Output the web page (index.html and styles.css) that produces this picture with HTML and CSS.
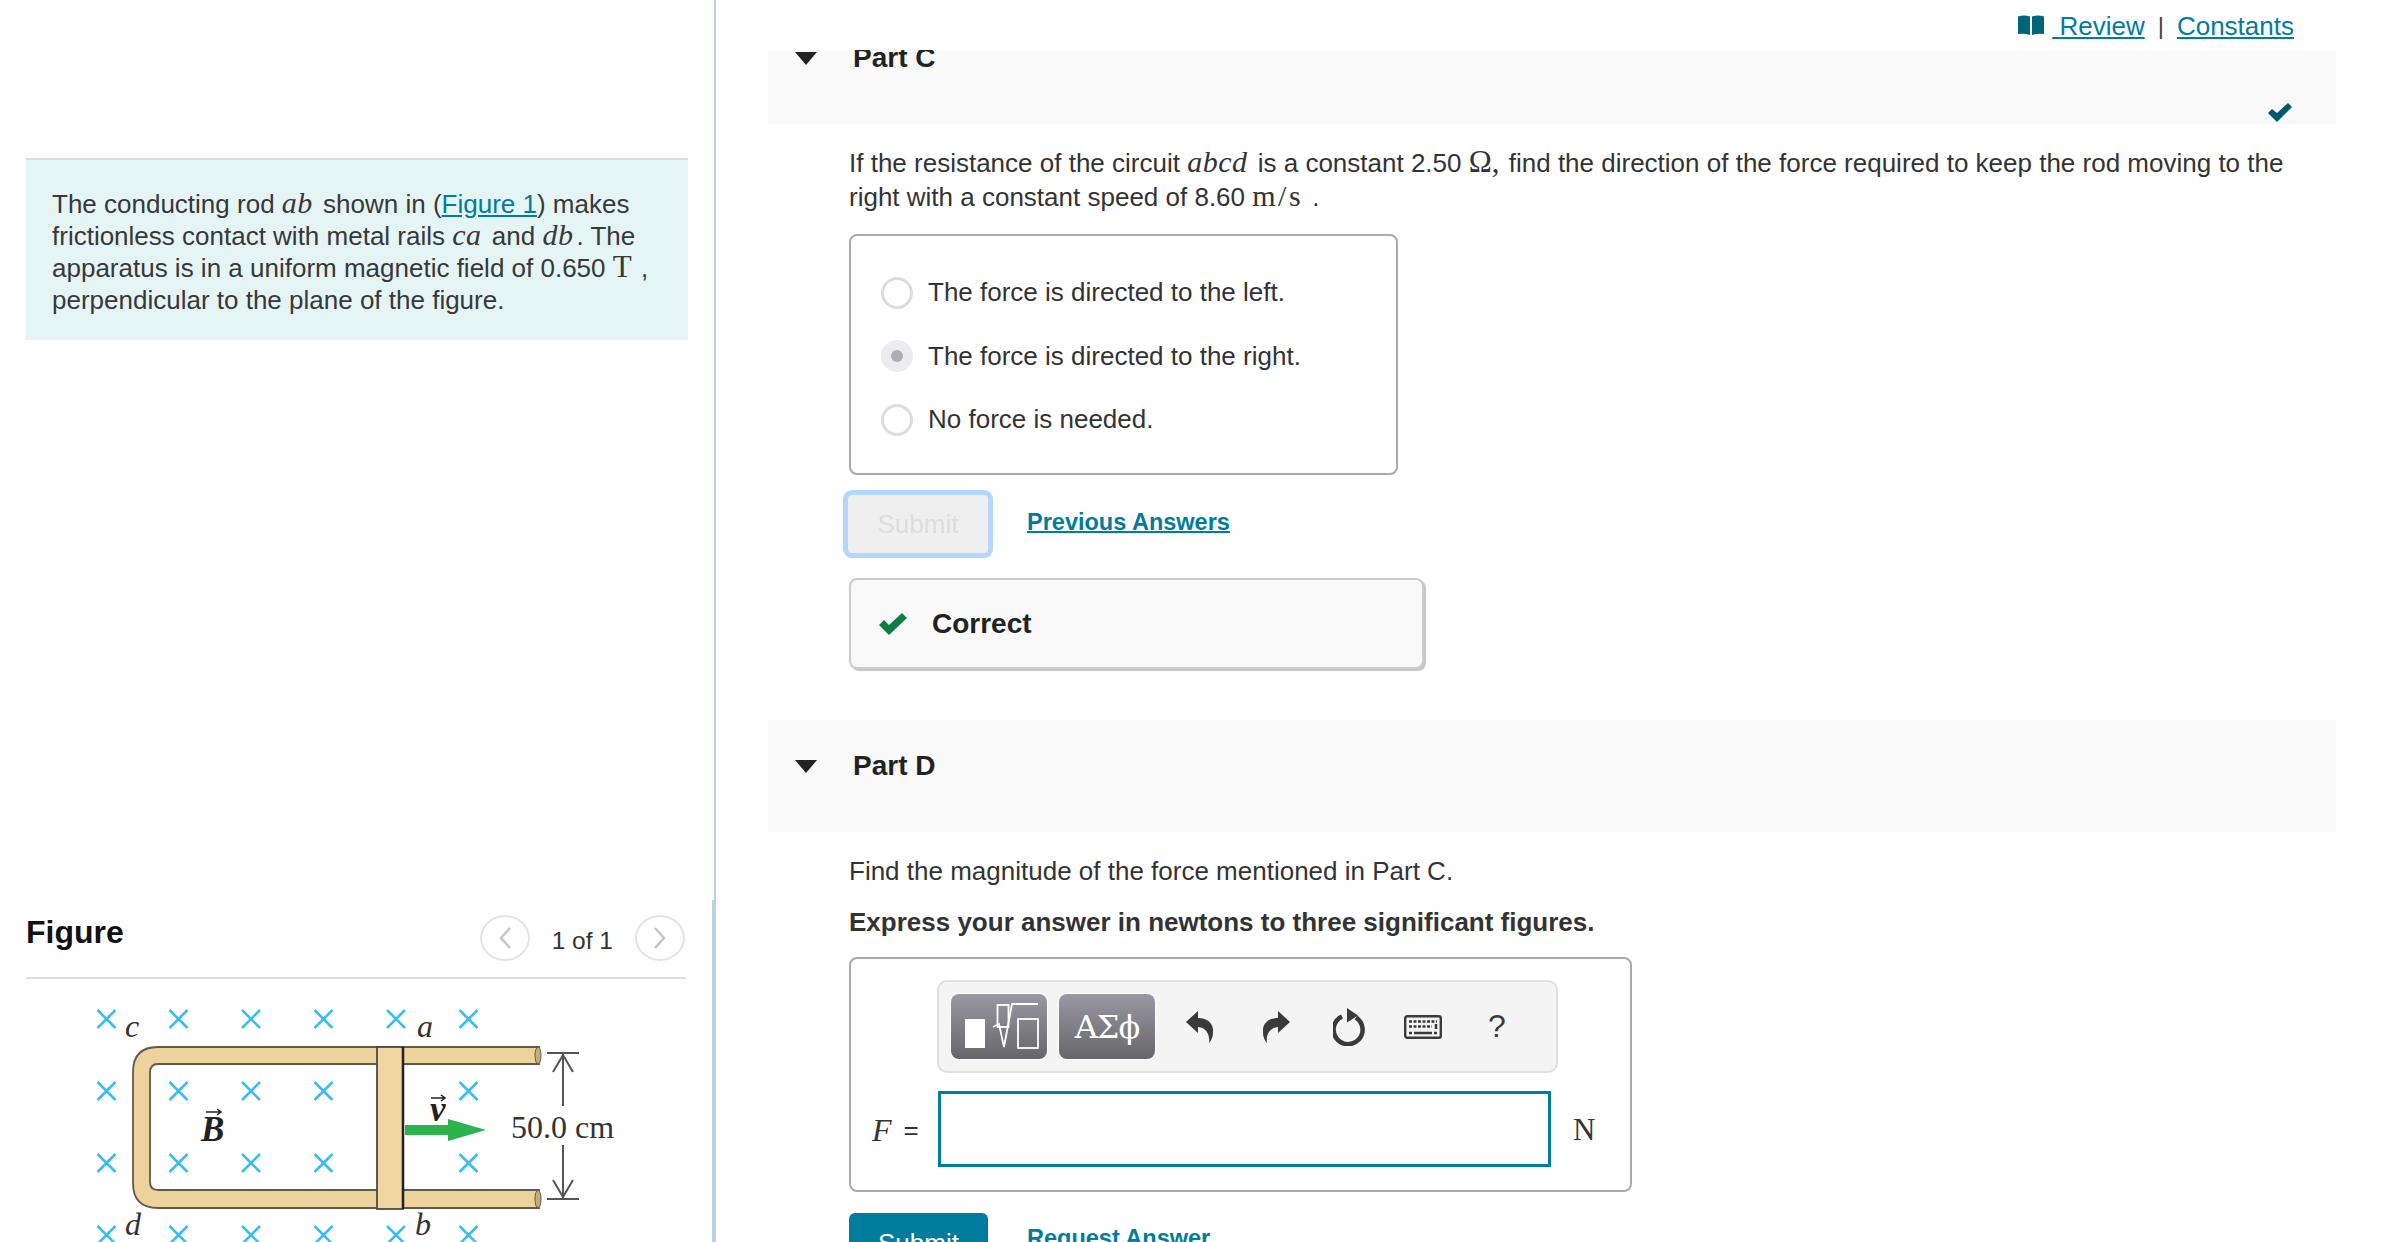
FILE: index.html
```html
<!DOCTYPE html>
<html lang="en">
<head>
<meta charset="utf-8">
<title>Part D</title>
<link rel="stylesheet" href="styles.css">
</head>
<body>
<div class="page">
  <aside class="left">
    <div class="intro">
      <p>The conducting rod <i class="m">ab</i> shown in (<a href="#">Figure 1</a>) makes frictionless contact with metal rails <i class="m">ca</i> and <i class="m">db</i>. The apparatus is in a uniform magnetic field of 0.650 <span class="mu">T</span> , perpendicular to the plane of the figure.</p>
    </div>
    <div class="fig-head">
      <h2>Figure</h2>
      <div class="pager">
        <span class="circle"><svg width="14" height="24" viewBox="0 0 14 24"><path class="chev" d="M12 2 3 12l9 10"/></svg></span>
        <span class="count">1 of 1</span>
        <span class="circle"><svg width="14" height="24" viewBox="0 0 14 24"><path class="chev" d="M2 2l9 10-9 10"/></svg></span>
      </div>
    </div>
    <svg class="diagram" width="714" height="263" viewBox="2 979 714 263">
      <path class="crosses" d="M99.500 1010l18 18m0-18l-18 18M171.500 1010l18 18m0-18l-18 18M244 1010l18 18m0-18l-18 18M316.500 1010l18 18m0-18l-18 18M389 1010l18 18m0-18l-18 18M461.500 1010l18 18m0-18l-18 18M99.500 1082l18 18m0-18l-18 18M171.500 1082l18 18m0-18l-18 18M244 1082l18 18m0-18l-18 18M316.500 1082l18 18m0-18l-18 18M461.500 1082l18 18m0-18l-18 18M99.500 1154l18 18m0-18l-18 18M171.500 1154l18 18m0-18l-18 18M244 1154l18 18m0-18l-18 18M316.500 1154l18 18m0-18l-18 18M461.500 1154l18 18m0-18l-18 18M99.500 1226l18 18m0-18l-18 18M171.500 1226l18 18m0-18l-18 18M244 1226l18 18m0-18l-18 18M316.500 1226l18 18m0-18l-18 18M389 1226l18 18m0-18l-18 18M461.500 1226l18 18m0-18l-18 18"/>
      <path class="rail" d="M541 1047H160Q135 1047 135 1072V1183Q135 1208 160 1208H541V1190H160Q152 1190 152 1182V1073Q152 1064 160 1064H541Z"/>
      <ellipse class="rail-end" cx="540" cy="1055.500" rx="3" ry="8.500"/>
      <ellipse class="rail-end" cx="540" cy="1199" rx="3" ry="9"/>
      <rect class="rod" x="379" y="1047" width="26" height="162"/>
      <path class="rod-edge" d="M405 1047V1209"/>
      <path class="arrow" d="M407 1125H450V1119L488 1130 450 1141V1135H407Z"/>
      <path class="dim" d="M549 1053H581M549 1199H581M565 1053V1106M565 1145V1199M555 1072 565 1055 575 1072M555 1180 565 1197 575 1180"/>
      <path class="vec" d="M208 1112H223M219 1109l4 3-4 3M433 1098H447M443 1095l4 3-4 3"/>
      <text class="lab" x="127" y="1037">c</text>
      <text class="lab" x="419" y="1037">a</text>
      <text class="lab" x="127" y="1235">d</text>
      <text class="lab" x="417" y="1235">b</text>
      <text class="lab strong" x="203" y="1141">B</text>
      <text class="lab strong" x="432" y="1121">v</text>
      <text class="dim-text" x="513" y="1138">50.0 cm</text>
    </svg>
  </aside>

  <main class="right">
    <nav class="top-links">
      <svg class="book" width="26" height="20" viewBox="0 0 26 20"><path d="M0 1.500Q6 -.500 12 1.500V20Q6 18 0 19zM26 1.500Q20 -.500 14 1.500V20Q20 18 26 19z"/></svg>
      <a href="#">&nbsp;Review</a>
      <span class="sep">|</span>
      <a href="#">Constants</a>
    </nav>
    <div class="scroller">
      <div class="scroll-inner">
        <section>
          <header class="part-head">
            <span class="tri"></span>
            <h3>Part C</h3>
            <svg class="done" width="24" height="19" viewBox="0 0 24 19"><path d="M0 10l4-4 5 4L20 0l4 4-15 15z"/></svg>
          </header>
          <div class="part-body part-c">
            <p class="q">If the resistance of the circuit <i class="m">abcd</i> is a constant 2.50 <span class="mu">Ω,</span> find the direction of the force required to keep the rod moving to the right with a constant speed of 8.60 <span class="mu wide">m/s</span> .</p>
            <div class="choices">
              <label class="choice"><span class="radio"></span>The force is directed to the left.</label>
              <label class="choice"><span class="radio on"></span>The force is directed to the right.</label>
              <label class="choice"><span class="radio"></span>No force is needed.</label>
            </div>
            <div class="actions">
              <button class="btn disabled" type="button">Submit</button>
              <a class="strong-link" href="#">Previous Answers</a>
            </div>
            <div class="correct">
              <svg width="28" height="22" viewBox="0 0 28 22"><path d="M0 12l5-5 5 5L23 0l5 5-18 17z"/></svg>
              <strong>Correct</strong>
            </div>
          </div>
        </section>
        <section>
          <header class="part-head">
            <span class="tri"></span>
            <h3>Part D</h3>
          </header>
          <div class="part-body part-d">
            <p class="q">Find the magnitude of the force mentioned in Part C.</p>
            <p class="q bold">Express your answer in newtons to three significant figures.</p>
            <div class="answer">
              <div class="toolbar">
                <span class="tool">
                  <svg width="96" height="65" viewBox="0 0 96 65">
                    <rect class="w" x="14" y="25" width="20" height="29"/>
                    <rect class="wl" x="46.500" y="11" width="11" height="22"/>
                    <path class="wl" d="M42 33l6-3 5 23 8-43h26"/>
                    <rect class="wl" x="67" y="25" width="20" height="29"/>
                  </svg>
                </span>
                <span class="tool greek">ΑΣϕ</span>
                <svg class="ic undo" width="27" height="32" viewBox="0 0 27 32"><path d="M0 11 12 0v7c10 0 16 6 15 15 0 4-2 8-4 10 1-6-1-15-11-16v6z"/></svg>
                <svg class="ic redo" width="27" height="32" viewBox="0 0 27 32"><path d="M27 11 15 0v7C5 7-1 13 0 22c0 4 2 8 4 10-1-6 1-15 11-16v6z"/></svg>
                <svg class="ic reset" width="34" height="38" viewBox="0 0 34 38"><path class="ring" d="M23 9.500A14.500 14.500 0 1 1 9 8.500"/><path d="M14 0l11 7.500-11 7z"/></svg>
                <svg class="ic kbd" width="38" height="24" viewBox="0 0 38 24"><rect class="kb" x="1.200" y="1.200" width="35.600" height="21.600" rx="2"/><path class="keys" d="M5 6.500h28M5 11.500h23M5 18h3"/><path class="keyline" d="M10 18h18M30 18h3M32 9v5"/></svg>
                <span class="help">?</span>
              </div>
              <div class="entry">
                <span class="var"><i>F</i><span class="eq">=</span></span>
                <input class="field" type="text" aria-label="F">
                <span class="unit">N</span>
              </div>
            </div>
            <div class="actions last">
              <button class="btn primary" type="button">Submit</button>
              <a class="strong-link" href="#">Request Answer</a>
            </div>
          </div>
        </section>
      </div>
    </div>
  </main>
</div>
</body>
</html>
```

FILE: styles.css
```css
* { box-sizing: border-box; }
html, body { margin: 0; height: 100%; background: #fff; overflow: hidden; }
body { font-family: "Liberation Sans", Arial, sans-serif; font-size: 26px; color: #333; }
p { margin: 0; }
a { color: #007c9d; }

.page { display: grid; grid-template-columns: 716px 1fr; height: 1242px; overflow: hidden; }

/* left column */
.left { border-right: 2px solid #bdd0e0; padding-top: 158px; position: relative; }
.left::after { content: ""; position: absolute; right: 0; top: 900px; bottom: 0; width: 2px; background: #bdd0e0; }
.intro { margin-left: 26px; width: 662px; height: 182px; background: #e5f5f6; border-top: 2px solid #d5dfe1; padding: 28px 26px 0; line-height: 32px; font-size: 26px; color: #383838; }
.m { font-family: "Liberation Serif", serif; font-style: italic; font-size: 30px; line-height: 0; letter-spacing: .5px; margin-right: 3px; }
.mu { font-family: "Liberation Serif", serif; font-size: 31px; line-height: 0; margin-right: 2px; }
.mu.wide { letter-spacing: 2.500px; font-size: 30px; }

.fig-head { margin: 572px 0 0 26px; width: 660px; height: 67px; display: flex; justify-content: space-between; align-items: flex-start; border-bottom: 2px solid #ddd; }
.fig-head h2 { margin: 1px 0 0; font-size: 32px; line-height: 38px; font-weight: bold; color: #111; }
.pager { display: flex; align-items: center; gap: 22px; color: #333; margin-top: 3px; margin-right: 1px; }
.circle { width: 50px; height: 46px; border: 2px solid #e4e4e4; border-radius: 50%; display: flex; align-items: center; justify-content: center; }
.chev { fill: none; stroke: #c4c4c4; stroke-width: 2.500; }
.count { font-size: 24.500px; position: relative; top: 3px; }

.diagram { display: block; }
.crosses { fill: none; stroke: #37bdf1; stroke-width: 2.500; }
.rail { fill: #edd29c; stroke: #5e5a50; stroke-width: 1.800; }
.rail-end { fill: #c9ad78; stroke: #5e5a50; stroke-width: 1; }
.rod { fill: #f0d6a0; stroke: #4c4a44; stroke-width: 1.800; }
.rod-edge { stroke: #222; stroke-width: 2.500; }
.arrow { fill: #2db34e; }
.dim { fill: none; stroke: #555; stroke-width: 2; }
.vec { fill: none; stroke: #222; stroke-width: 1.500; }
.lab { font-family: "Liberation Serif", serif; font-style: italic; font-size: 32px; fill: #333; }
.lab.strong { font-weight: bold; font-size: 35px; fill: #222; }
.dim-text { font-family: "Liberation Serif", serif; font-size: 32px; fill: #333; }

/* right column */
.top-links { height: 50px; padding: 11px 94px 0 0; display: flex; justify-content: flex-end; align-items: flex-start; line-height: 30px; font-size: 26px; }
.book { fill: #00647a; margin: 4px 8px 0 0; }
.sep { margin: 0 13px; color: #444; font-size: 24px; }
.scroller { height: 1192px; overflow: hidden; }
.scroll-inner { margin-top: -38px; padding: 0 52px; }

.part-head { position: relative; height: 112px; background: #f9f9f9; display: flex; align-items: flex-start; padding: 30px 0 0 29px; }
.part-head h3 { margin: 0 0 0 20px; font-size: 28px; line-height: 32px; color: #222; font-weight: bold; }
.tri { width: 0; height: 0; margin: 10px 16px 0 -2px; border-left: 11.500px solid transparent; border-right: 11.500px solid transparent; border-top: 13px solid #222; }
.done { position: absolute; right: 44px; bottom: 2px; fill: #00586e; }

.part-body { padding-left: 81px; }
.part-c { height: 596px; padding-top: 22px; }
.part-d { padding-top: 22px; }
.q { line-height: 34px; font-size: 26px; color: #333; padding-right: 30px; }
.q.bold { font-weight: bold; margin-top: 17px; }

.choices { width: 549px; height: 241px; margin-top: 20px; border: 2px solid #aaa; border-radius: 8px; padding: 25px 0 0 30px; }
.choice { display: flex; align-items: center; height: 63.500px; font-size: 26px; color: #333; }
.radio { width: 32px; height: 32px; border: 3px solid #dcdcdc; border-radius: 50%; margin-right: 15px; background: #fff; flex: none; display: flex; align-items: center; justify-content: center; }
.radio.on { background: #ececf0; border-color: #ececf0; }
.radio.on::after { content: ""; width: 12px; height: 12px; border-radius: 50%; background: #adadb4; }

.actions { display: flex; align-items: center; gap: 39px; margin-top: 15px; }
.btn { font: 26px "Liberation Sans", Arial, sans-serif; border: 0; padding: 0; }
.btn.disabled { width: 140px; height: 58px; margin: 5px 0 0 -1px; background: #efefef; color: #ddd; border-radius: 4px; box-shadow: 0 0 0 5px #b3d7ff; }
.strong-link { font-weight: bold; font-size: 23.500px; text-decoration-thickness: 2px; position: relative; top: 1px; }

.correct { width: 575px; height: 91px; margin-top: 25px; background: #f9f9f9; border: 2px solid #ccc; border-radius: 8px; box-shadow: 2px 2px 1px #c6c6c6; display: flex; align-items: center; padding-left: 28px; gap: 25px; font-size: 28px; color: #222; }
.correct svg { fill: #0a8040; }

.answer { width: 783px; height: 235px; margin-top: 18px; border: 2px solid #aaa; border-radius: 8px; padding: 21px 0 0 86px; }
.toolbar { width: 621px; height: 93px; background: #f4f4f4; border: 2px solid #e0e0e0; border-radius: 10px; display: flex; align-items: center; padding-left: 12px; }
.tool { width: 96px; height: 65px; border-radius: 8px; background: linear-gradient(#9a98a3, #66666a); display: flex; align-items: center; justify-content: center; color: #fff; box-shadow: 0 0 0 1px #fff; margin-right: 12px; flex: none; }
.greek { font-family: "DejaVu Serif", "Liberation Serif", serif; font-size: 32px; letter-spacing: -1px; }
.w { fill: #fff; }
.wl { fill: none; stroke: #fff; stroke-width: 1.800; }
.ic { fill: #3a3a3a; flex: none; }
.undo { margin-left: 19px; }
.redo { margin-left: 50px; }
.reset { margin-left: 43px; }
.ring { fill: none; stroke: #3a3a3a; stroke-width: 4.500; }
.kbd { margin-left: 37px; }
.kb { fill: none; stroke: #3a3a3a; stroke-width: 2.400; }
.keys { fill: none; stroke: #3a3a3a; stroke-width: 2.500; stroke-dasharray: 3 1.500; }
.keyline { fill: none; stroke: #3a3a3a; stroke-width: 2.500; }
.help { font-size: 32px; color: #3a3a3a; margin-left: 46px; }

.entry { display: flex; align-items: center; margin: 18px 0 0 -66px; height: 76px; }
.var { width: 66px; font-family: "Liberation Serif", serif; font-size: 32px; display: flex; align-items: center; padding-top: 2px; padding-left: 1px; }
.eq { font-family: "Liberation Sans", sans-serif; font-size: 26px; margin-left: 12px; }
.field { width: 613px; height: 76px; border: 3px solid #007c9d; background: #fff; padding: 0; outline: 0; border-radius: 0; margin-left: 1px; }
.unit { font-family: "Liberation Serif", serif; font-size: 31px; margin-left: 22px; padding-top: 2px; }

.actions.last { margin-top: 21px; gap: 39px; align-items: flex-start; }
.btn.primary { width: 139px; height: 60px; background: #007c9d; color: #fff; border-radius: 6px; }
.actions.last .strong-link { top: 12px; }
```
